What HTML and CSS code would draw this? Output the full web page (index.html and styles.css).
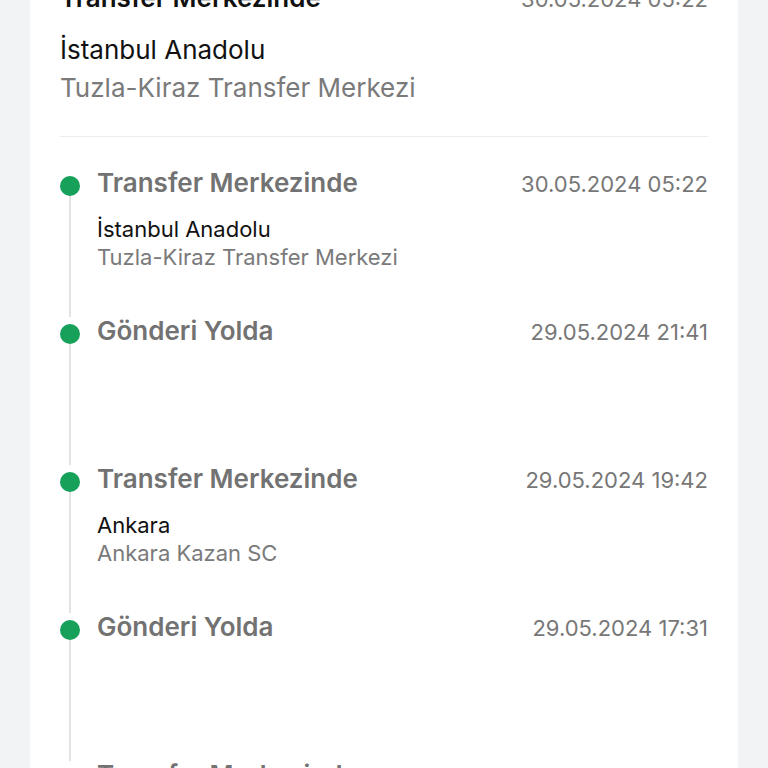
FILE: index.html
```html
<!DOCTYPE html>
<html>
<head>
  <title>Gönderi Hareketleri</title>
  <meta name="viewport" content="width=device-width, initial-scale=1.0">
  <link rel="stylesheet" href="styles.css">
</head>
<body>

  <div class="card">

    <div class="summary">
      <div class="head">
        <span class="summary-title">Transfer Merkezinde</span>
        <span class="summary-date">30.05.2024 05:22</span>
      </div>
      <div class="summary-city">İstanbul Anadolu</div>
      <div class="summary-branch">Tuzla-Kiraz Transfer Merkezi</div>
    </div>

    <div class="timeline">

      <div class="event">
        <div class="rail"><span class="dot"></span></div>
        <div class="info">
          <div class="head">
            <span class="title">Transfer Merkezinde</span>
            <span class="date">30.05.2024 05:22</span>
          </div>
          <div class="city">İstanbul Anadolu</div>
          <div class="branch">Tuzla-Kiraz Transfer Merkezi</div>
        </div>
      </div>

      <div class="event">
        <div class="rail"><span class="dot"></span></div>
        <div class="info">
          <div class="head">
            <span class="title">Gönderi Yolda</span>
            <span class="date">29.05.2024 21:41</span>
          </div>
        </div>
      </div>

      <div class="event">
        <div class="rail"><span class="dot"></span></div>
        <div class="info">
          <div class="head">
            <span class="title">Transfer Merkezinde</span>
            <span class="date">29.05.2024 19:42</span>
          </div>
          <div class="city">Ankara</div>
          <div class="branch">Ankara Kazan SC</div>
        </div>
      </div>

      <div class="event">
        <div class="rail"><span class="dot"></span></div>
        <div class="info">
          <div class="head">
            <span class="title">Gönderi Yolda</span>
            <span class="date">29.05.2024 17:31</span>
          </div>
        </div>
      </div>

      <div class="event">
        <div class="rail"><span class="dot"></span></div>
        <div class="info">
          <div class="head">
            <span class="title">Transfer Merkezinde</span>
            <span class="date">29.05.2024 16:07</span>
          </div>
          <div class="city">Ankara</div>
          <div class="branch">Ankara Transfer Merkezi</div>
        </div>
      </div>

    </div>
  </div>

</body>
</html>
```

FILE: styles.css
```css
body {
  margin: 0;
  background-color: #f2f3f5;
  font-family: Inter, "Noto Sans", sans-serif;
  color: #111;
}
.card {
  background-color: #fff;
  margin: -48px 30px 0;
  padding: 30px 30px 0;
}
.head {
  display: flex;
  justify-content: space-between;
  align-items: baseline;
}
.summary {
  padding-bottom: 29px;
  border-bottom: 1px solid #ececec;
}
.summary-title {
  font-size: 26px;
  line-height: 32px;
  font-weight: 600;
  color: #111;
}
.summary-date {
  font-size: 22px;
  color: #7a7a7a;
}
.summary-city {
  margin-top: 17px;
  font-size: 26px;
  line-height: 38px;
}
.summary-branch {
  font-size: 26px;
  line-height: 38px;
  color: #7a7a7a;
}
.timeline {
  padding-top: 32px;
}
.event {
  display: flex;
  gap: 17px;
  height: 148px;
}
.rail {
  width: 20px;
  display: flex;
  flex-direction: column;
  align-items: center;
}
.rail::after {
  content: "";
  flex: 1;
  width: 2px;
  background-color: #e3e3e3;
}
.dot {
  width: 20px;
  height: 20px;
  margin-top: 7px;
  border-radius: 50%;
  background-color: #16a05a;
  flex-shrink: 0;
}
.info {
  flex: 1;
}
.title {
  font-size: 26px;
  line-height: 28px;
  font-weight: 600;
  color: #727272;
}
.date {
  font-size: 22px;
  color: #777;
}
.city {
  margin-top: 18px;
  font-size: 22px;
  line-height: 28px;
}
.branch {
  font-size: 22px;
  line-height: 28px;
  color: #7a7a7a;
}
```
